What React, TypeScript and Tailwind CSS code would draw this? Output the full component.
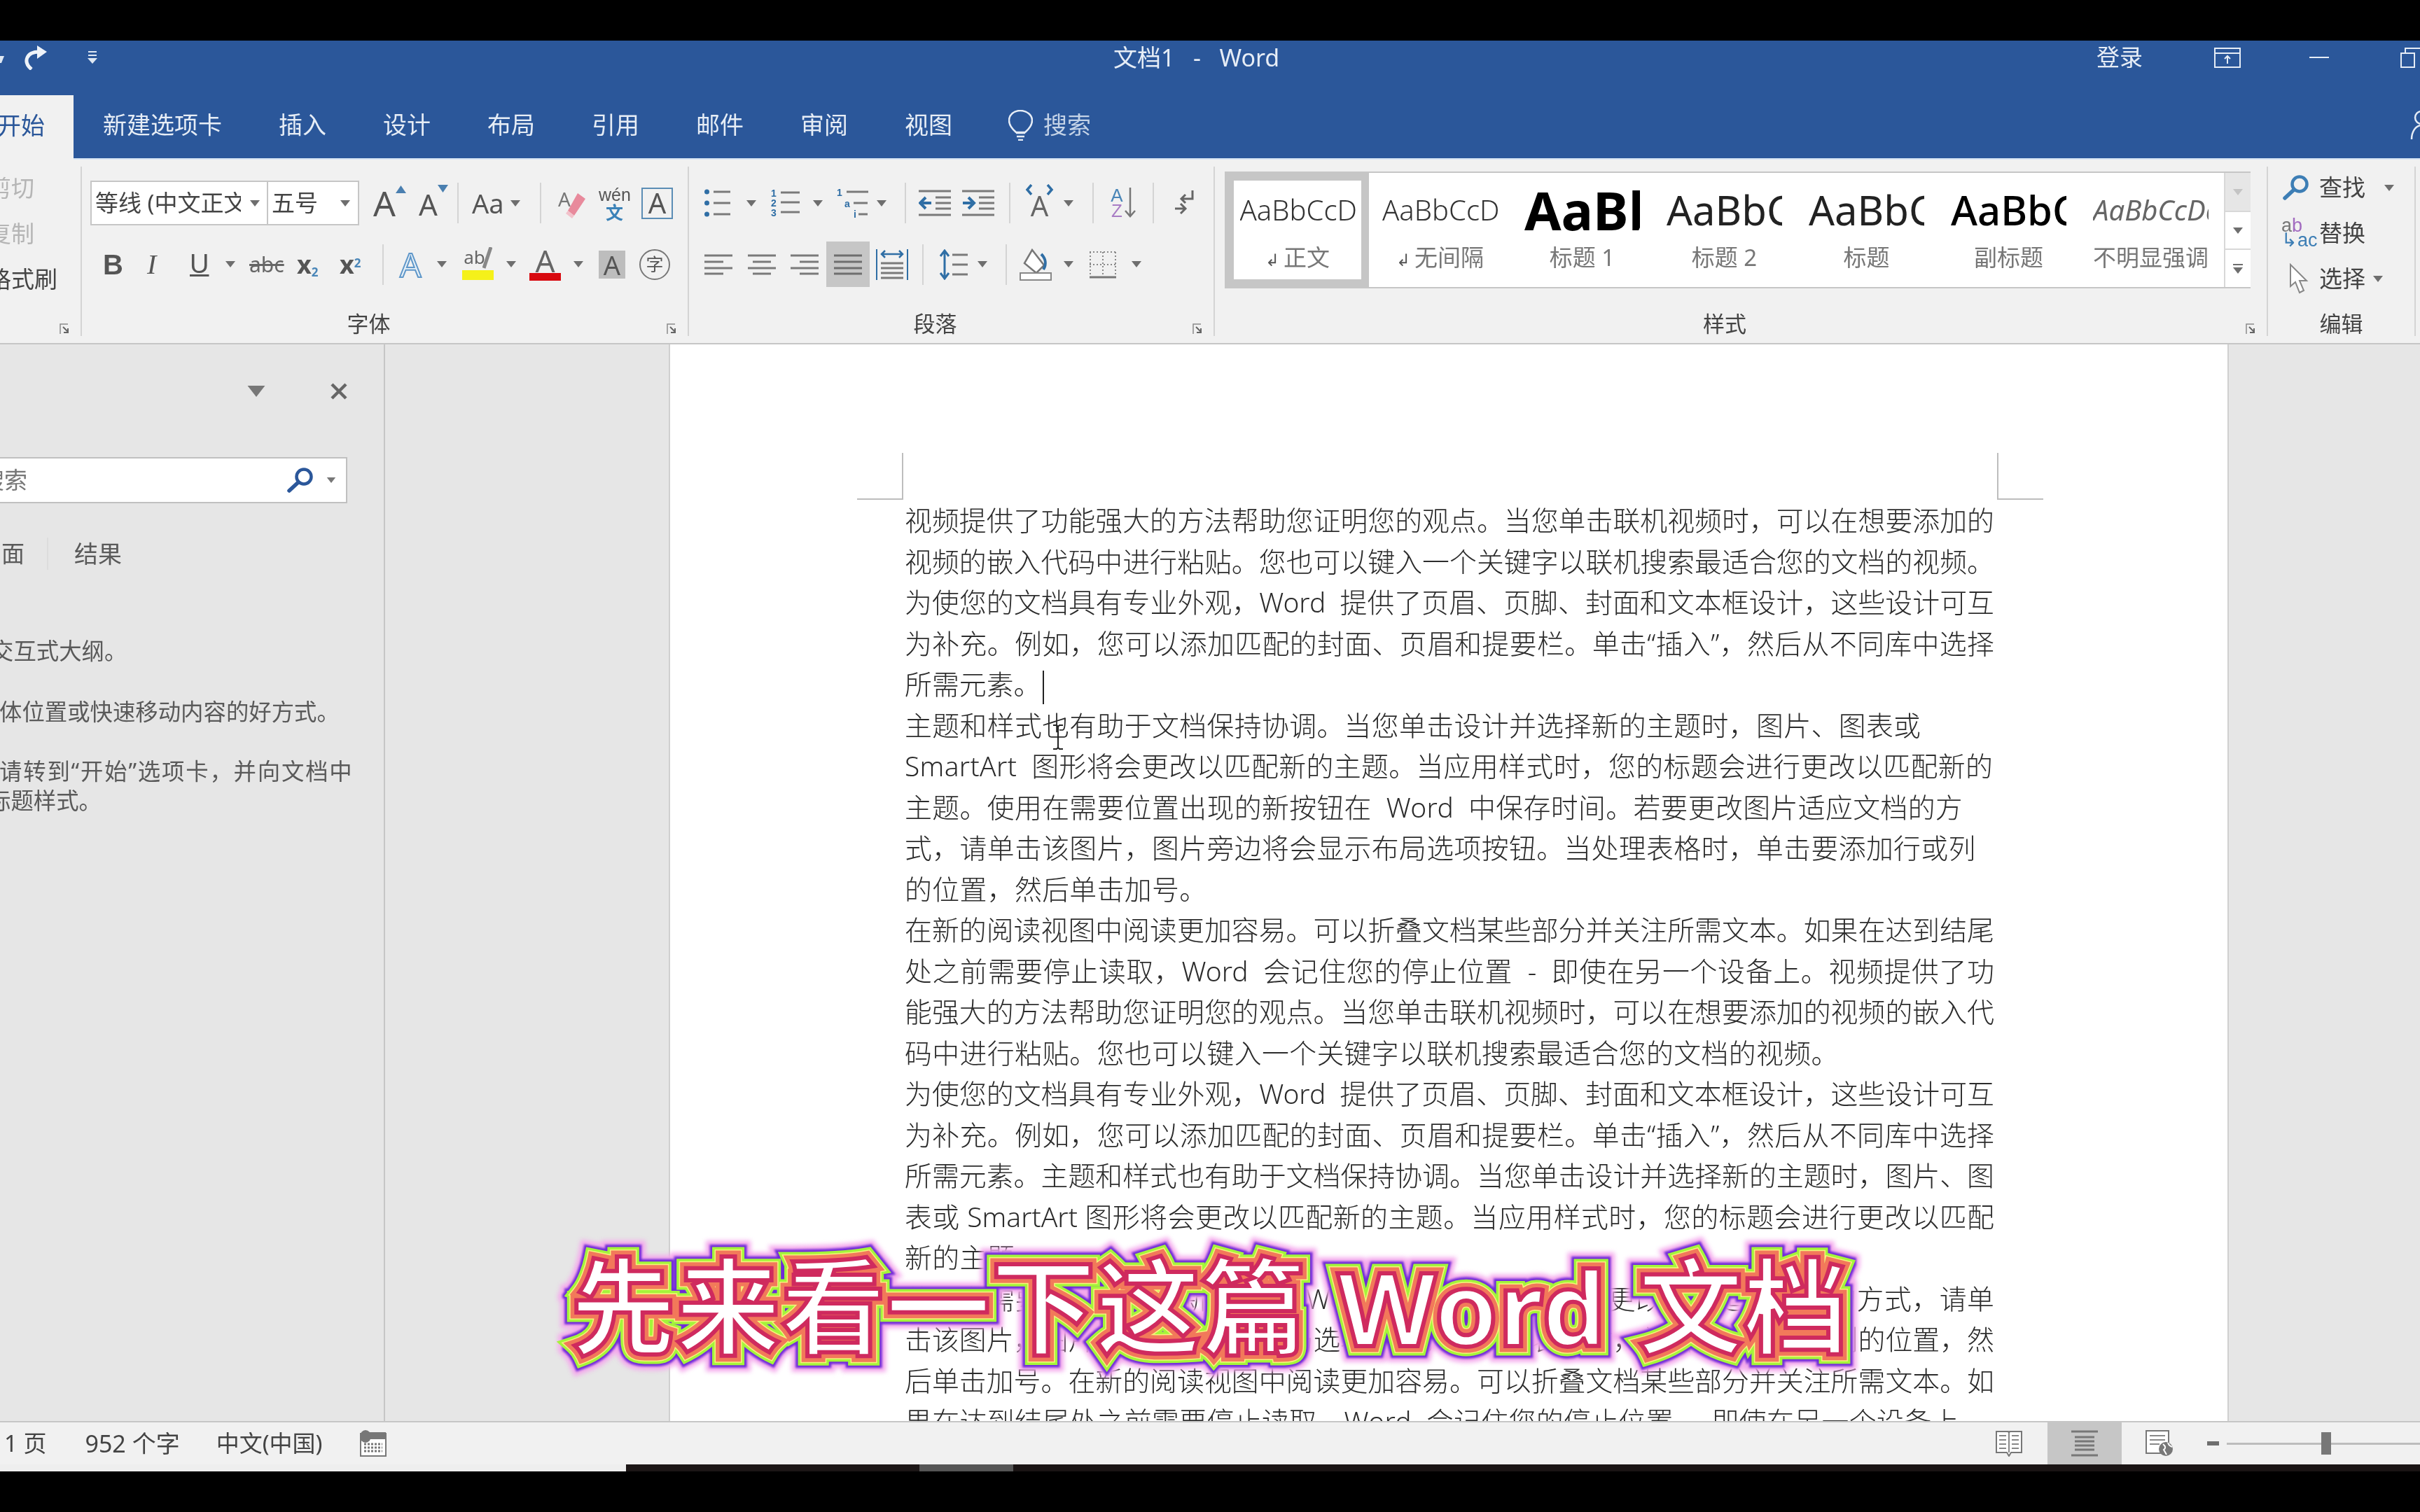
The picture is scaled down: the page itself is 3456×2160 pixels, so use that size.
import React from 'react';

const GRAY = '#7a7a7a';
const BLUE = '#2f6ea5';

const Drop = ({ color = '#6e6e6e', w = 14, h = 9 }: { color?: string; w?: number; h?: number }) => (
  <svg width={w} height={h} viewBox="0 0 14 9"><path d="M0 0h14L7 9z" fill={color} /></svg>
);

const Bars = ({ w, h, bars, color = GRAY, t = 3 }: { w: number; h: number; bars: number[][]; color?: string; t?: number }) => (
  <svg width={w} height={h} viewBox={`0 0 ${w} ${h}`}>
    {bars.map((b, i) => <path key={i} d={`M${b[0]} ${b[2]}H${b[1]}`} stroke={color} strokeWidth={t} />)}
  </svg>
);

const Sep = () => <div className="w-[2px] h-[58px] bg-[#d4d4d4]" />;

const Launcher = () => (
  <svg width="14" height="16" viewBox="0 0 14 16" className="mt-[14px]">
    <path d="M1 15V1h11" fill="none" stroke="#8a8a8a" strokeWidth="1.5" />
    <path d="M5 5l7 7M12 7v6H6" fill="none" stroke="#666" strokeWidth="2" />
  </svg>
);

const GroupLabel = ({ text, launcher = true }: { text?: string; launcher?: boolean }) => (
  <div className="flex items-center h-[35px] mt-auto">
    <div className="flex-1 text-center text-[31px] leading-[35px] text-[#444]">{text}</div>
    {launcher && <div className="w-[46px] flex justify-center"><Launcher /></div>}
  </div>
);

// font group icons
const GrowA = ({ up }: { up: boolean }) => (
  <div className="flex items-start">
    <span className={up ? 'text-[50px] leading-[54px] text-[#555]' : 'text-[42px] leading-[54px] text-[#555] mt-[3px]'}>A</span>
    <svg width="15" height="11" viewBox="0 0 15 11" className="mt-[2px]">
      <path d={up ? 'M7.5 0L15 11H0z' : 'M0 0h15L7.5 11z'} fill="#4a7fb0" />
    </svg>
  </div>
);

const Eraser = () => (
  <svg width="40" height="46" viewBox="0 0 40 46">
    <text x="0" y="28" fontSize="28" fill="#777" fontFamily="Noto Sans">A</text>
    <path d="M28 9l11 8-16 24-9-7z" fill="#e88a9c" />
    <path d="M14 34l9 7-3 4-9-7z" fill="#f2c2cb" />
  </svg>
);

const Highlighter = () => (
  <div className="flex flex-col items-center w-[45px]">
    <div className="flex items-center h-[30px] mt-[-4px]">
      <span className="text-[26px] leading-[28px] text-[#666]">ab</span>
      <svg width="14" height="34" viewBox="0 0 14 34" className="ml-[-4px] mt-[6px]"><path d="M12 0L2 30" stroke="#888" strokeWidth="5" /></svg>
    </div>
    <div className="w-[45px] h-[14px] bg-[#f5f11a] mt-[4px]" />
  </div>
);

const ColorA = () => (
  <div className="flex flex-col items-center w-[45px]">
    <span className="text-[44px] leading-[36px] text-[#666]">A</span>
    <div className="w-[45px] h-[11px] bg-[#d8090f]" />
  </div>
);

// paragraph icons
const Bullets = () => (
  <svg width="38" height="40" viewBox="0 0 38 40">
    {[4, 20, 36].map((y) => (
      <g key={y}><circle cx="3.5" cy={y} r="3.5" fill={BLUE} /><path d={`M13 ${y}H37`} stroke={GRAY} strokeWidth="3" /></g>
    ))}
  </svg>
);

const Numbered = () => (
  <svg width="42" height="42" viewBox="0 0 42 42" fontFamily="Liberation Sans" fontSize="14" fontWeight="700" fill={BLUE}>
    {[[12, '1'], [26, '2'], [40, '3']].map(([y, n]) => (
      <g key={String(n)}><text x="0" y={Number(y)}>{n}</text><path d={`M14 ${Number(y) - 6}H41`} stroke={GRAY} strokeWidth="3" /></g>
    ))}
  </svg>
);

const MultiLevel = () => (
  <svg width="46" height="44" viewBox="0 0 46 44" fontFamily="Liberation Sans" fontSize="14" fontWeight="700" fill={BLUE}>
    <text x="0" y="12">1</text><path d="M14 6H45" stroke={GRAY} strokeWidth="3" />
    <text x="11" y="28">a</text><path d="M24 22H44" stroke={GRAY} strokeWidth="3" />
    <text x="24" y="43">i</text><path d="M31 38H44" stroke={GRAY} strokeWidth="3" />
  </svg>
);

const Indent = ({ inc }: { inc: boolean }) => (
  <svg width="46" height="38" viewBox="0 0 46 38">
    <path d="M0 2H46M0 36H46" stroke={GRAY} strokeWidth="3" />
    <path d="M24 11H46M24 19H46M24 27H46" stroke={GRAY} strokeWidth="3" />
    <path d={inc ? 'M1 19H14M9 11l8 8-8 8' : 'M18 19H5M10 11l-8 8 8 8'} fill="none" stroke={BLUE} strokeWidth="4" />
  </svg>
);

const TextDir = () => (
  <div className="flex flex-col items-center w-[45px] mt-[-8px]">
    <svg width="45" height="16" viewBox="0 0 45 16"><path d="M11 1L5 8l6 7M34 1l6 7-6 7" fill="none" stroke={BLUE} strokeWidth="3.5" /></svg>
    <span className="text-[40px] leading-[30px] text-[#666]">A</span>
  </div>
);

const SortAZ = () => (
  <div className="flex items-center w-[40px]">
    <div className="flex flex-col items-center w-[20px] font-['Liberation_Sans',sans-serif]">
      <span className="text-[26px] leading-[22px] text-[#4a86b8]">A</span>
      <span className="text-[26px] leading-[22px] text-[#a87cc4]">Z</span>
    </div>
    <svg width="18" height="44" viewBox="0 0 18 44"><path d="M9 0V41M2 33l7 8 7-8" fill="none" stroke="#777" strokeWidth="2.5" /></svg>
  </div>
);

const Pilcrow = () => (
  <svg width="30" height="38" viewBox="0 0 30 38">
    <path d="M27 1v12H12M17 7l-6 6 6 6" fill="none" stroke="#666" strokeWidth="3" />
    <path d="M2 27H16M10 20l7 7-7 7" fill="none" stroke="#666" strokeWidth="3" />
  </svg>
);

const Distributed = () => (
  <svg width="46" height="44" viewBox="0 0 46 44">
    <path d="M1 0V44M45 0V44" stroke={BLUE} strokeWidth="2" />
    <path d="M8 7H38M13 2L8 7l5 5M33 2l5 5-5 5" fill="none" stroke={BLUE} strokeWidth="2.5" />
    <path d="M7 20H39M7 27H39M7 34H39M7 41H39" stroke={GRAY} strokeWidth="3" />
  </svg>
);

const LineSpacing = () => (
  <svg width="42" height="44" viewBox="0 0 42 44">
    <path d="M8 2V42M2 10l6-8 6 8M2 34l6 8 6-8" fill="none" stroke={BLUE} strokeWidth="3" />
    <path d="M19 8H41M19 22H41M19 36H41" stroke={GRAY} strokeWidth="3" />
  </svg>
);

const Shading = () => (
  <svg width="46" height="46" viewBox="0 0 46 46">
    <path d="M18 2l17 22-11 11-17-14z" fill="#fff" stroke="#777" strokeWidth="2.5" />
    <path d="M31 8c6 6 8 14 3 22" fill="none" stroke={BLUE} strokeWidth="4" />
    <rect x="1" y="35" width="44" height="10" fill="#fff" stroke="#888" strokeWidth="2" />
  </svg>
);

const Borders = () => (
  <svg width="40" height="40" viewBox="0 0 40 40">
    <path d="M1 2H39M1 20H39M2 2V38M20 2V38M38 2V38" stroke="#888" strokeWidth="2" strokeDasharray="2 3" fill="none" />
    <path d="M1 38H39" stroke="#777" strokeWidth="3" />
  </svg>
);

const Magnifier = ({ w, h, color }: { w: number; h: number; color: string }) => (
  <svg width={w} height={h} viewBox="0 0 38 36">
    <circle cx="24" cy="13" r="10.5" fill="none" stroke={color} strokeWidth="4.5" />
    <path d="M16 21L3 33" stroke={color} strokeWidth="5.5" strokeLinecap="round" />
  </svg>
);

const CursorIcon = () => (
  <svg width="28" height="44" viewBox="0 0 28 44">
    <path d="M2 2V33l7-6 6 15 6-3-6-14h10z" fill="#fff" stroke="#888" strokeWidth="2" />
  </svg>
);

const styles = [
  { label: '无间隔', mark: true, cls: 'text-[40px] font-light text-[#333]', sample: 'AaBbCcDd' },
  { label: '标题 1', mark: false, cls: 'text-[76px] font-bold text-black', sample: 'AaBb' },
  { label: '标题 2', mark: false, cls: 'text-[58px] text-[#222]', sample: 'AaBbC' },
  { label: '标题', mark: false, cls: 'text-[58px] text-[#222]', sample: 'AaBbC' },
  { label: '副标题', mark: false, cls: 'text-[58px] font-medium text-black', sample: 'AaBbC' },
  { label: '不明显强调', mark: false, cls: 'text-[40px] italic text-[#666]', sample: 'AaBbCcDd' },
];

const StyleCard = ({ label, mark, cls, sample }: { label: string; mark: boolean; cls: string; sample: string }) => (
  <div className="w-[165px] flex flex-col items-center">
    <div className={`w-[165px] h-[76px] overflow-hidden whitespace-nowrap leading-[76px] ${cls}`}>{sample}</div>
    <div className="h-[52px] mt-[4px] leading-[52px] text-[33px] text-[#777] whitespace-nowrap">
      {mark && <span className="text-[24px] mr-[6px] text-[#555]">↲</span>}{label}
    </div>
  </div>
);

const para1 = [
  '视频提供了功能强大的方法帮助您证明您的观点。当您单击联机视频时，可以在想要添加的',
  '视频的嵌入代码中进行粘贴。您也可以键入一个关键字以联机搜索最适合您的文档的视频。',
  '为使您的文档具有专业外观，Word  提供了页眉、页脚、封面和文本框设计，这些设计可互',
  '为补充。例如，您可以添加匹配的封面、页眉和提要栏。单击“插入”，然后从不同库中选择',
];
const para2 = [
  '主题和样式也有助于文档保持协调。当您单击设计并选择新的主题时，图片、图表或',
  'SmartArt  图形将会更改以匹配新的主题。当应用样式时，您的标题会进行更改以匹配新的',
  '主题。使用在需要位置出现的新按钮在  Word  中保存时间。若要更改图片适应文档的方',
  '式，请单击该图片，图片旁边将会显示布局选项按钮。当处理表格时，单击要添加行或列',
  '的位置，然后单击加号。',
];
const para3 = [
  '在新的阅读视图中阅读更加容易。可以折叠文档某些部分并关注所需文本。如果在达到结尾',
  '处之前需要停止读取，Word  会记住您的停止位置  -  即使在另一个设备上。视频提供了功',
  '能强大的方法帮助您证明您的观点。当您单击联机视频时，可以在想要添加的视频的嵌入代',
];
const para4 = [
  '为使您的文档具有专业外观，Word  提供了页眉、页脚、封面和文本框设计，这些设计可互',
  '为补充。例如，您可以添加匹配的封面、页眉和提要栏。单击“插入”，然后从不同库中选择',
  '所需元素。主题和样式也有助于文档保持协调。当您单击设计并选择新的主题时，图片、图',
  '表或 SmartArt 图形将会更改以匹配新的主题。当应用样式时，您的标题会进行更改以匹配',
];
const para5 = [
  '使用在需要位置出现的新按钮在  Word  中保存时间。若要更改图片适应文档的方式，请单',
  '击该图片，图片旁边将会显示布局选项按钮。当处理表格时，单击要添加行或列的位置，然',
  '后单击加号。在新的阅读视图中阅读更加容易。可以折叠文档某些部分并关注所需文本。如',
  '果在达到结尾处之前需要停止读取，Word  会记住您的停止位置  -  即使在另一个设备上。',
];

const Justified = ({ text }: { text: string }) => (
  <div className="h-[58.5px] leading-[58.5px] whitespace-pre-wrap text-justify [text-align-last:justify]">{text}</div>
);

const Plain = ({ text }: { text: string }) => (
  <div className="h-[58.5px] leading-[58.5px] whitespace-pre tracking-[0.35px]">{text}</div>
);

const captionLayers = [
  'text-[#f4a8ec] blur-[3px] [-webkit-text-stroke:45px_#f4a8ec]',
  'text-[#6f2ad8] blur-[1.5px] [-webkit-text-stroke:34px_#6f2ad8]',
  'text-[#a4f53a] [-webkit-text-stroke:27px_#a4f53a]',
  'text-[#f6f27c] [-webkit-text-stroke:20px_#f6f27c]',
  'text-[#f2795a] [-webkit-text-stroke:17px_#f2795a]',
  'text-white [-webkit-text-stroke:6px_#cf2a5e]',
];

const App: React.FC = () => {
  return (
    <div lang="zh-CN" className="w-[3456px] h-[2160px] overflow-hidden bg-black relative blur-[0.5px] font-['Noto_Sans','Noto_Sans_CJK_SC',sans-serif]">
      <div className="h-[58px]" />

      {/* Title bar */}
      <div className="h-[78px] bg-[#2b579a] flex items-center pb-[30px] text-[#e6edf6] text-[33px]">
        <div className="w-[1590px] flex items-center shrink-0">
          <svg width="6" height="10" viewBox="0 0 6 10" className="mt-[6px]"><path d="M0 0h6L2 10H0z" fill="#dfe8f3" /></svg>
          <svg width="40" height="36" viewBox="0 0 40 36" className="ml-[26px]">
            <path d="M13 35C0 24 6 10 24 10" fill="none" stroke="#eef3f9" strokeWidth="5" />
            <path d="M21 1l14 9-14 10z" fill="#eef3f9" />
          </svg>
          <svg width="16" height="18" viewBox="0 0 16 18" className="ml-[52px]">
            <path d="M2 1h12M2 6h12" stroke="#dfe8f3" strokeWidth="2" />
            <path d="M1 10h14l-7 8z" fill="#dfe8f3" />
          </svg>
        </div>
        <span className="whitespace-pre text-[34px]">文档1   -   Word</span>
        <span className="ml-auto">登录</span>
        <svg width="38" height="29" viewBox="0 0 38 29" className="ml-[102px]">
          <path d="M1 1h36v27H1zM1 8h36" fill="none" stroke="#e6edf6" strokeWidth="2" />
          <path d="M19 23V13M15 16l4-4 4 4" fill="none" stroke="#e6edf6" strokeWidth="2" />
        </svg>
        <div className="w-[28px] h-[2px] bg-[#e6edf6] ml-[98px]" />
        <svg width="28" height="29" viewBox="0 0 28 29" className="ml-[102px] shrink-0">
          <path d="M1 8h19v20H1zM7 8V1h21" fill="none" stroke="#e6edf6" strokeWidth="2" />
        </svg>
      </div>

      {/* Tabs */}
      <div className="h-[92px] bg-[#2b579a] border-b-2 border-[#d6e4f3] flex items-stretch text-[34px] text-[#e6edf6]">
        <div className="w-[105px] h-[92px] bg-[#f1f1f1] text-[#2b579a] flex items-center justify-end pr-[41px] pb-[5px] overflow-hidden whitespace-nowrap shrink-0">开始</div>
        <div className="flex items-center gap-[81px] ml-[42px] pb-[5px]">
          {['新建选项卡', '插入', '设计', '布局', '引用', '邮件', '审阅', '视图'].map((t) => <span key={t}>{t}</span>)}
        </div>
        <div className="flex items-center ml-[80px] pb-[5px] text-[#c4d3e7]">
          <svg width="35" height="44" viewBox="0 0 35 44">
            <path d="M11 32C3 25 1 20 1 15 1 7 8 1 17 1s17 6 17 14c0 5-2 10-10 17z" fill="none" stroke="#e6edf6" strokeWidth="2.5" />
            <path d="M11 33h13M12 38h11M14 43h7" stroke="#e6edf6" strokeWidth="2.5" />
          </svg>
          <span className="ml-[15px]">搜索</span>
        </div>
        <div className="ml-auto flex items-center pb-[6px] mr-[-18px]">
          <svg width="32" height="42" viewBox="0 0 32 42">
            <circle cx="16" cy="11" r="9" fill="none" stroke="#e6edf6" strokeWidth="2.5" />
            <path d="M2 42c0-11 6-20 14-20s14 9 14 20" fill="none" stroke="#e6edf6" strokeWidth="2.5" />
          </svg>
        </div>
      </div>

      {/* Ribbon */}
      <div className="h-[264px] bg-[#f1f1f1] border-b-2 border-[#c6c6c6] flex py-[10px] text-[#444]">
        {/* Clipboard */}
        <div className="w-[117px] h-[242px] border-r-2 border-[#d4d4d4] flex flex-col shrink-0 overflow-hidden">
          <div className="ml-[-17px] mt-[-2px] text-[33px] whitespace-nowrap">
            <div className="h-[65px] leading-[65px] text-[#b5b5b5]">剪切</div>
            <div className="h-[65px] leading-[65px] text-[#b5b5b5]">复制</div>
            <div className="h-[65px] leading-[65px] text-[#444]">格式刷</div>
          </div>
          <GroupLabel />
        </div>

        {/* Font */}
        <div className="w-[867px] h-[242px] border-r-2 border-[#d4d4d4] flex flex-col shrink-0 pt-[20px]">
          <div className="flex items-center h-[64px] pl-[12px]">
            <div className="flex w-[384px] h-[64px] border-2 border-[#c6c6c6] bg-white text-[33px] text-[#444] shrink-0">
              <div className="w-[252px] flex items-center border-r-2 border-[#c6c6c6] pl-[5px] pr-[10px]">
                <span className="w-[208px] overflow-hidden whitespace-nowrap">等线 (中文正文</span>
                <span className="ml-auto"><Drop /></span>
              </div>
              <div className="flex-1 flex items-center pl-[5px] pr-[11px]">
                <span>五号</span>
                <span className="ml-auto"><Drop /></span>
              </div>
            </div>
            <div className="w-[65px] ml-[20px]"><GrowA up /></div>
            <div className="w-[55px]"><GrowA up={false} /></div>
            <div className="w-[21px]"><Sep /></div>
            <div className="w-[55px] text-[38px] text-[#555]">Aa</div>
            <div className="w-[42px]"><Drop /></div>
            <div className="w-[26px]"><Sep /></div>
            <div className="w-[58px]"><Eraser /></div>
            <div className="w-[61px] flex flex-col items-start">
              <span className="text-[25px] leading-[26px] text-[#555] font-['Liberation_Sans',sans-serif]">wén</span>
              <span className="text-[25px] leading-[24px] text-[#3b82b8] ml-[10px] font-bold">文</span>
            </div>
            <div className="w-[45px] h-[45px] border-2 border-[#5b8db5] flex items-center justify-center text-[40px] leading-none text-[#555]">A</div>
          </div>

          <div className="flex items-center h-[65px] mt-[23px] pl-[30px]">
            <div className="w-[63px] text-[40px] font-bold text-[#555] font-['Liberation_Sans',sans-serif]">B</div>
            <div className="w-[61px] text-[40px] italic text-[#555] font-['Liberation_Serif',serif]">I</div>
            <div className="w-[51px] text-[38px] text-[#555] underline font-['Liberation_Sans',sans-serif]">U</div>
            <div className="w-[34px]"><Drop /></div>
            <div className="w-[68px] text-[30px] text-[#666] line-through">abc</div>
            <div className="w-[61px] text-[36px] font-bold text-[#555]">x<sub className="text-[17px] text-[#4a86b8]">2</sub></div>
            <div className="w-[61px] text-[36px] font-bold text-[#555]">x<sup className="text-[17px] text-[#4a86b8]">2</sup></div>
            <div className="w-[25px]"><Sep /></div>
            <div className="w-[53px] text-[48px] leading-none text-[#e8f1f8] [-webkit-text-stroke:2px_#5f97c9]">A</div>
            <div className="w-[36px]"><Drop /></div>
            <div className="w-[63px]"><Highlighter /></div>
            <div className="w-[33px]"><Drop /></div>
            <div className="w-[63px]"><ColorA /></div>
            <div className="w-[36px]"><Drop /></div>
            <div className="w-[58px]">
              <div className="w-[38px] h-[40px] bg-[#bdbdbd] flex items-center justify-center text-[38px] leading-none text-[#555]">A</div>
            </div>
            <div className="w-[44px] h-[44px] rounded-full border-2 border-[#777] flex items-center justify-center text-[25px] leading-none text-[#555]">字</div>
          </div>
          <GroupLabel text="字体" />
        </div>

        {/* Paragraph */}
        <div className="w-[751px] h-[242px] border-r-2 border-[#d4d4d4] flex flex-col shrink-0 pt-[20px]">
          <div className="flex items-center h-[64px] pl-[22px]">
            <div className="w-[60px]"><Bullets /></div>
            <div className="w-[35px]"><Drop /></div>
            <div className="w-[60px]"><Numbered /></div>
            <div className="w-[34px]"><Drop /></div>
            <div className="w-[57px]"><MultiLevel /></div>
            <div className="w-[40px]"><Drop /></div>
            <div className="w-[20px]"><Sep /></div>
            <div className="w-[62px]"><Indent inc={false} /></div>
            <div className="w-[67px]"><Indent inc /></div>
            <div className="w-[21px]"><Sep /></div>
            <div className="w-[57px]"><TextDir /></div>
            <div className="w-[41px]"><Drop /></div>
            <div className="w-[25px]"><Sep /></div>
            <div className="w-[61px]"><SortAZ /></div>
            <div className="w-[30px]"><Sep /></div>
            <Pilcrow />
          </div>

          <div className="flex items-center h-[65px] mt-[23px] pl-[22px]">
            <div className="w-[62px]"><Bars w={40} h={30} bars={[[0, 40, 2], [0, 27, 11], [0, 40, 20], [0, 27, 28]]} /></div>
            <div className="w-[61px]"><Bars w={40} h={30} bars={[[0, 40, 2], [7, 33, 11], [0, 40, 20], [7, 33, 28]]} /></div>
            <div className="w-[51px]"><Bars w={40} h={30} bars={[[0, 40, 2], [13, 40, 11], [0, 40, 20], [13, 40, 28]]} /></div>
            <div className="w-[62px] h-[65px] bg-[#c6c6c6] flex items-center justify-center"><Bars w={40} h={30} bars={[[0, 40, 2], [0, 40, 11], [0, 40, 20], [0, 40, 28]]} color="#6e6e6e" /></div>
            <div className="w-[66px] ml-[9px]"><Distributed /></div>
            <div className="w-[24px]"><Sep /></div>
            <div className="w-[55px]"><LineSpacing /></div>
            <div className="w-[40px]"><Drop /></div>
            <div className="w-[20px]"><Sep /></div>
            <div className="w-[63px]"><Shading /></div>
            <div className="w-[36px]"><Drop /></div>
            <div className="w-[61px]"><Borders /></div>
            <Drop />
          </div>
          <GroupLabel text="段落" />
        </div>

        {/* Styles */}
        <div className="w-[1504px] h-[242px] border-r-2 border-[#d4d4d4] flex flex-col shrink-0 pt-[7px]">
          <div className="flex ml-[14px] w-[1465px] h-[167px] border-y-2 border-l-2 border-[#c6c6c6] bg-white">
            <div className="w-[204px] h-full bg-[#c6c6c6] p-[11px] shrink-0 flex">
              <div className="w-[182px] bg-white pt-[4px] flex justify-center">
                <StyleCard label="正文" mark cls="text-[40px] font-light text-[#333]" sample="AaBbCcDd" />
              </div>
            </div>
            {styles.map((s) => (
              <div key={s.label} className="w-[203px] pt-[15px] flex justify-center shrink-0">
                <StyleCard {...s} />
              </div>
            ))}
            <div className="w-[38px] ml-auto flex flex-col border-l-2 border-[#d8d8d8] shrink-0">
              <div className="h-[56px] bg-[#e6e6e6] flex items-center justify-center border-b-2 border-[#d8d8d8]"><Drop color="#c4c4c4" /></div>
              <div className="h-[54px] flex items-center justify-center border-b-2 border-[#d8d8d8]"><Drop /></div>
              <div className="flex-1 flex flex-col items-center justify-center gap-[3px]">
                <div className="w-[14px] h-[2px] bg-[#6e6e6e]" />
                <Drop />
              </div>
            </div>
          </div>
          <GroupLabel text="样式" />
        </div>

        {/* Editing */}
        <div className="w-[211px] h-[242px] border-r-2 border-[#d4d4d4] flex flex-col shrink-0 text-[33px]">
          <div className="flex flex-col gap-[5px]">
            <div className="h-[60px] flex items-center pl-[21px]">
              <Magnifier w={38} h={36} color="#3d7eb5" />
              <span className="ml-[14px]">查找</span>
              <span className="ml-[27px]"><Drop /></span>
            </div>
            <div className="h-[60px] flex items-center pl-[19px]">
              <div className="w-[46px] flex flex-col font-['Liberation_Sans',sans-serif] text-[27px] leading-[21px]">
                <span className="text-[#777]">a<span className="text-[#a26bc0]">b</span></span>
                <span className="text-[#3d7eb5] whitespace-nowrap">↳ac</span>
              </div>
              <span className="ml-[8px]">替换</span>
            </div>
            <div className="h-[60px] flex items-center pl-[30px]">
              <CursorIcon />
              <span className="ml-[15px]">选择</span>
              <span className="ml-[11px]"><Drop /></span>
            </div>
          </div>
          <GroupLabel text="编辑" launcher={false} />
        </div>
      </div>

      {/* Work area */}
      <div className="h-[1538px] flex">
        <div className="w-[550px] border-r-2 border-[#c6c6c6] bg-[#e6e6e6] flex flex-col shrink-0 overflow-hidden text-[#5a5a5a]">
          <div className="h-[134px] flex items-center shrink-0">
            <div className="ml-[353px]"><Drop w={26} h={16} color="#777" /></div>
            <svg width="24" height="24" viewBox="0 0 24 24" className="ml-[93px]">
              <path d="M2 2l20 20M22 2L2 22" stroke="#666" strokeWidth="4.5" />
            </svg>
          </div>
          <div className="w-[496px] h-[66px] mt-[27px] shrink-0 bg-white border-y-2 border-r-2 border-[#c0c0c0] flex items-center overflow-hidden">
            <span className="ml-[-27px] text-[33px] text-[#777]">搜索</span>
            <span className="ml-auto"><Magnifier w={38} h={38} color="#2b579a" /></span>
            <span className="ml-[18px] mr-[14px]"><Drop w={14} h={8} color="#777" /></span>
          </div>
          <div className="h-[52px] mt-[46px] flex items-center text-[33px] shrink-0">
            <span className="ml-[-31px] whitespace-nowrap">页面</span>
            <div className="w-[2px] h-[46px] bg-[#dcdcdc] ml-[32px]" />
            <span className="ml-[37px] text-[34px]">结果</span>
          </div>
          <div className="text-[32.4px] leading-[42px] whitespace-nowrap">
            <div className="mt-[91px] ml-[-13px]">交互式大纲。</div>
            <div className="mt-[45px] ml-[-1px]">体位置或快速移动内容的好方式。</div>
            <div className="mt-[43px] ml-[-1px] tracking-[1.8px]">请转到“开始”选项卡，并向文档中</div>
            <div className="ml-[-17px]">标题样式。</div>
          </div>
        </div>

        <div className="w-[405px] bg-[#e6e6e6] shrink-0" />

        <div className="w-[2228px] bg-white border-x-2 border-[#d0d0d0] overflow-hidden relative shrink-0">
          <div className="flex justify-between ml-[267px] w-[1694px] mt-[155px]">
            <div className="w-[66px] h-[67px] border-r-2 border-b-2 border-[#bdbdbd]" />
            <div className="w-[66px] h-[67px] border-l-2 border-b-2 border-[#bdbdbd]" />
          </div>
          <div className="ml-[335px] w-[1556px] text-[38.88px] font-light text-[#2c2c2c]">
            {para1.map((t) => <Justified key={t} text={t} />)}
            <div className="h-[58.5px] leading-[58.5px]">
              所需元素。<span className="inline-block w-[2px] h-[48px] bg-[#222] align-middle ml-[3px]" />
            </div>
            {para2.map((t) => <Plain key={t} text={t} />)}
            {para3.map((t) => <Justified key={t} text={t} />)}
            <Plain text="码中进行粘贴。您也可以键入一个关键字以联机搜索最适合您的文档的视频。" />
            {para4.map((t) => <Justified key={t} text={t} />)}
            <Plain text="新的主题。" />
            {para5.map((t, i) => (i < 3 ? <Justified key={t} text={t} /> : <Plain key={t} text={t} />))}
          </div>

          {/* mouse text cursor */}
          <svg width="18" height="36" viewBox="0 0 18 36" className="absolute left-[545px] top-[543px]">
            <path d="M2 1h5l2 2 2-2h5M9 3v30M2 35h5l2-2 2 2h5" fill="none" stroke="#222" strokeWidth="2" />
          </svg>
        </div>

        <div className="flex-1 bg-[#e6e6e6]" />
      </div>

      {/* Status bar */}
      <div className="h-[62px] bg-[#f1f1f1] border-t-2 border-[#c6c6c6] flex items-center text-[33px] text-[#444]">
        <span className="ml-[6px] whitespace-pre">1 页</span>
        <span className="ml-[55px] whitespace-pre text-[34px]">952 个字</span>
        <span className="ml-[52px]">中文(中国)</span>
        <svg width="38" height="38" viewBox="0 0 38 38" className="ml-[54px]">
          <rect x="1" y="5" width="36" height="32" fill="#fff" stroke="#777" strokeWidth="2" />
          <rect x="12" y="3" width="25" height="10" fill="#777" />
          <ellipse cx="8" cy="9" rx="8" ry="9" fill="#777" />
          <path d="M6 20h26M6 25h26M6 30h26" stroke="#777" strokeWidth="3" strokeDasharray="3 2" />
        </svg>
        <svg width="38" height="38" viewBox="0 0 38 38" className="ml-auto">
          <path d="M1 2h17l1 2 1-2h17v30H22l-3 5-3-5H1z" fill="#fff" stroke="#777" strokeWidth="2" />
          <path d="M5 8h10M5 14h10M5 20h10M5 26h10M23 8h10M23 14h10M23 20h10M23 26h10M19 4v28" stroke="#888" strokeWidth="2" />
        </svg>
        <div className="w-[106px] h-[60px] bg-[#c6c6c6] ml-[36px] flex items-center justify-center">
          <Bars w={40} h={38} bars={[[1, 39, 2], [6, 34, 10], [6, 34, 16], [6, 34, 22], [6, 34, 28], [1, 39, 36]]} color="#777" />
        </div>
        <svg width="40" height="38" viewBox="0 0 40 38" className="ml-[34px]">
          <path d="M1 1h32v32H1z" fill="#fff" stroke="#777" strokeWidth="2" />
          <path d="M6 8h22M6 14h22M6 20h14" stroke="#888" strokeWidth="2" />
          <circle cx="29" cy="27" r="10" fill="#777" />
          <path d="M25 20c4 3 4 6 1 8l4 7M32 18c1 3 3 5 6 6" stroke="#fff" strokeWidth="2" fill="none" />
        </svg>
        <div className="w-[17px] h-[6px] bg-[#6e6e6e] ml-[48px]" />
        <div className="w-[276px] h-[3px] bg-[#bdbdbd] ml-[11px] flex items-center shrink-0">
          <div className="w-[14px] h-[32px] bg-[#777] ml-[135px]" />
        </div>
      </div>

      {/* Player progress strip */}
      <div className="h-[10px] flex">
        <div className="w-[894px] bg-[#eeeeee]" />
        <div className="w-[419px] bg-[#1c1616]" />
        <div className="w-[134px] bg-[#555]" />
        <div className="flex-1 bg-[#1a1414]" />
      </div>

      {/* Burned-in caption */}
      <div className="absolute left-[815px] top-[1790px] grid text-[150px] leading-none font-bold whitespace-pre [word-spacing:6px]">
        {captionLayers.map((c) => (
          <span key={c} className={`relative [grid-area:1/1] ${c}`}>先来看一下这篇 <span className="text-[146px]">Word</span> 文档</span>
        ))}
      </div>
    </div>
  );
};

export default App;
